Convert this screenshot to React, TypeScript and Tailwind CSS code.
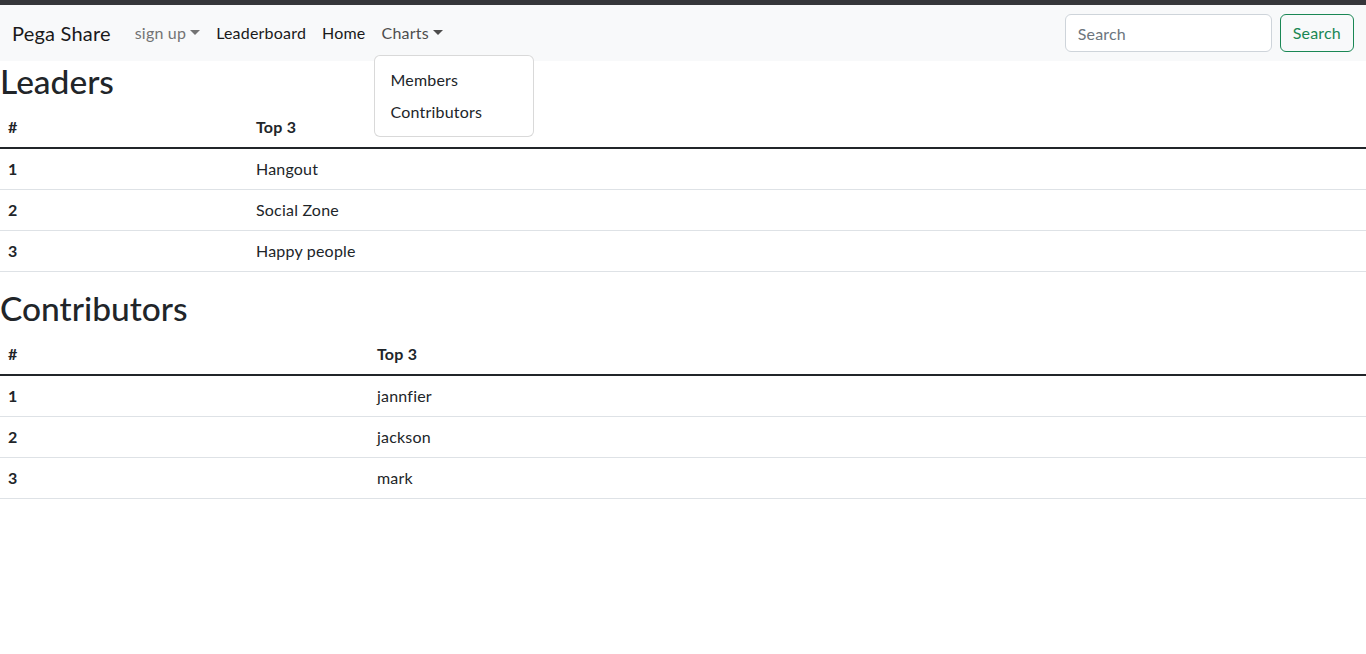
import React from 'react';

const leaders = ['Hangout', 'Social Zone', 'Happy people'];
const contributors = ['jannfier', 'jackson', 'mark'];

function Caret() {
  return (
    <span className="inline-block ml-[4px] align-[4px] w-0 h-0 border-t-[5px] border-t-current border-x-[5px] border-x-transparent" />
  );
}

function TopTable({ rows, firstCol }: { rows: string[]; firstCol: string }) {
  return (
    <table className="w-full border-collapse mb-4 text-[#212529] text-left">
      <thead>
        <tr>
          <th className={`${firstCol} px-2 py-2 border-b-2 border-[#212529] font-bold`}>#</th>
          <th className="px-2 py-2 border-b-2 border-[#212529] font-bold">Top 3</th>
        </tr>
      </thead>
      <tbody>
        {rows.map((name, i) => (
          <tr key={name}>
            <th className="px-2 py-2 border-b border-[#dee2e6] font-bold">{i + 1}</th>
            <td className="px-2 py-2 border-b border-[#dee2e6]">{name}</td>
          </tr>
        ))}
      </tbody>
    </table>
  );
}

export default function App() {
  return (
    <div className="min-h-screen bg-white text-[16px] leading-6 tracking-[0.2px] text-[#212529]" style={{ fontFamily: 'Lato, "Noto Sans", sans-serif' }}>
      <div className="h-[5px] bg-[#35363a]" />
      <nav className="bg-[#f8f9fa] h-[56px] px-3 flex items-center">
        <a className="text-[20px] leading-[30px] text-[#1a1a1a] mr-4">Pega Share</a>
        <ul className="flex items-center">
          <li className="px-2 py-2 text-[#737373]">sign up<Caret /></li>
          <li className="px-2 py-2 text-[#1a1a1a]">Leaderboard</li>
          <li className="px-2 py-2 text-[#1a1a1a]">Home</li>
          <li className="relative px-2 py-2 text-[#4d4d4d]">
            Charts<Caret />
            <div className="absolute left-0 top-[42px] z-10 w-[160px] py-2 bg-white border border-[rgba(0,0,0,0.15)] rounded-md">
              <div className="px-4 py-1 text-[#212529]">Members</div>
              <div className="px-4 py-1 text-[#212529]">Contributors</div>
            </div>
          </li>
        </ul>
        <form className="ml-auto flex items-center gap-2" onSubmit={(e) => e.preventDefault()}>
          <input
            placeholder="Search"
            className="w-[207px] h-[38px] px-3 bg-white border border-[#ced4da] rounded-md placeholder:text-[#6c757d] outline-none"
          />
          <button className="h-[38px] px-3 border border-[#198754] text-[#198754] rounded-md">Search</button>
        </form>
      </nav>
      <h2 className="text-[33.5px] leading-[1.2] font-medium tracking-normal mb-[6px]">Leaders</h2>
      <TopTable rows={leaders} firstCol="w-[248px]" />
      <h2 className="text-[33.5px] leading-[1.2] font-medium tracking-normal mb-[6px]">Contributors</h2>
      <TopTable rows={contributors} firstCol="w-[369px]" />
    </div>
  );
}
